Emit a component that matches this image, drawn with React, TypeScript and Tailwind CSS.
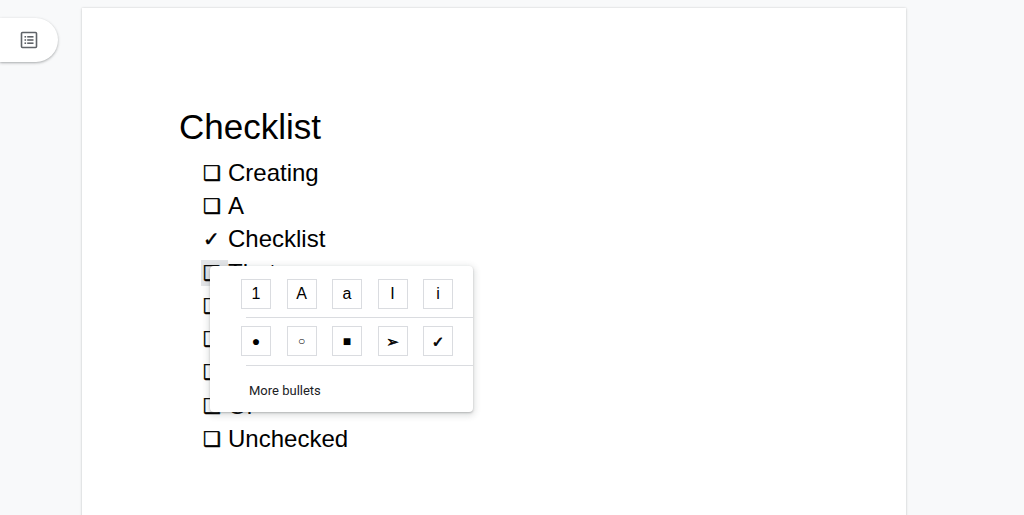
import React from 'react';

const items = [
  { bullet: '❑', text: 'Creating' },
  { bullet: '❑', text: 'A' },
  { bullet: '✓', text: 'Checklist' },
  { bullet: '❑', text: 'That', active: true },
  { bullet: '❑', text: 'Is' },
  { bullet: '❑', text: 'Very' },
  { bullet: '❑', text: 'Easy' },
  { bullet: '❑', text: 'Or' },
  { bullet: '❑', text: 'Unchecked' },
];

const numbered = ['1', 'A', 'a', 'I', 'i'];
const bullets = [
  { g: '●', cls: 'text-[14px]' },
  { g: '○', cls: 'text-[12px]' },
  { g: '■', cls: 'text-[14px]' },
  { g: '➢', cls: 'text-[15px] [-webkit-text-stroke:0.5px_black]' },
  { g: '✓', cls: 'text-[15px] [-webkit-text-stroke:0.7px_black]' },
];

function OutlineIcon() {
  return (
    <svg width="18" height="18" viewBox="0 0 18 18" fill="none">
      <rect x="1.5" y="1.5" width="15" height="15" rx="1" stroke="#5f6368" strokeWidth="1.6" />
      <rect x="4.5" y="5" width="1.6" height="1.6" fill="#5f6368" />
      <rect x="7.2" y="5" width="6.3" height="1.6" fill="#5f6368" />
      <rect x="4.5" y="8.2" width="1.6" height="1.6" fill="#5f6368" />
      <rect x="7.2" y="8.2" width="6.3" height="1.6" fill="#5f6368" />
      <rect x="4.5" y="11.4" width="1.6" height="1.6" fill="#5f6368" />
      <rect x="7.2" y="11.4" width="6.3" height="1.6" fill="#5f6368" />
    </svg>
  );
}

function Cell({ label, cls }: { label: string; cls: string }) {
  return (
    <div
      className={`w-[30px] h-[30px] border border-[#dadce0] flex items-center justify-center leading-none text-black ${cls}`}
      style={{ fontFamily: '"Liberation Sans", "DejaVu Sans", sans-serif' }}
    >
      {label}
    </div>
  );
}

export default function App() {
  return (
    <div className="relative w-[1024px] h-[515px] overflow-hidden bg-[#f8f9fa]">
      {/* outline toggle */}
      <div className="absolute left-0 top-[18px] w-[58px] h-[44px] bg-white rounded-r-full shadow-[0_1px_3px_rgba(60,64,67,0.3),0_1px_2px_rgba(60,64,67,0.15)] flex items-center justify-center">
        <OutlineIcon />
      </div>

      <div className="ml-[82px] mt-[8px] w-[824px] h-[520px] bg-white shadow-[0_0_2px_rgba(0,0,0,0.15),0_1px_3px_rgba(60,64,67,0.12)] relative">
        <div
          className="pl-[97px] pt-[100px] text-black"
          style={{ fontFamily: '"Liberation Sans", "DejaVu Sans", sans-serif' }}
        >
          <h1 className="text-[35px] leading-[38px]">Checklist</h1>
          <ul className="mt-[10px] ml-[24px]">
            {items.map((it, i) => (
              <li key={i} className="flex items-center h-[33.3px] text-[24px]">
                <span
                  className={`w-[25px] flex items-center ${
                    it.active ? 'bg-[#e3e5e8] h-[26px] -ml-[2px] pl-[2px] w-[27px]' : ''
                  }`}
                >
                  <span className="text-[20px] leading-none [-webkit-text-stroke:0.5px_black]">{it.bullet}</span>
                </span>
                <span className="leading-none">{it.text}</span>
              </li>
            ))}
          </ul>
        </div>

        {/* bullet picker menu */}
        <div className="absolute left-[128px] top-[258px] w-[263px] h-[146px] bg-white rounded-[4px] shadow-[0_2px_6px_2px_rgba(60,64,67,0.15),0_1px_2px_rgba(60,64,67,0.3)]">
          <div className="pl-[31px] pt-[13px] flex gap-[15.5px]">
            {numbered.map((n) => (
              <Cell key={n} label={n} cls="text-[16px]" />
            ))}
          </div>
          <div className="ml-[36px] mt-[8px] h-px bg-[#dadce0]" />
          <div className="pl-[31px] pt-[8px] flex gap-[15.5px]">
            {bullets.map((b) => (
              <Cell key={b.g} label={b.g} cls={b.cls} />
            ))}
          </div>
          <div className="ml-[36px] mt-[9px] h-px bg-[#dadce0]" />
          <div
            className="pl-[39px] pt-[15px] text-[13px] text-[#202124]"
            style={{ fontFamily: 'Roboto, sans-serif' }}
          >
            More bullets
          </div>
        </div>
      </div>
    </div>
  );
}
